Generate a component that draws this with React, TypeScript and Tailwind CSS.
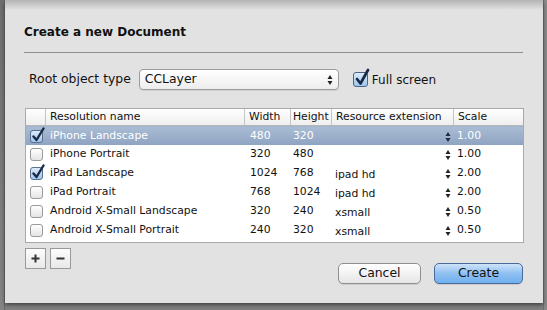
import React from "react";

const font = { fontFamily: '"DejaVu Sans", "Lucida Grande", sans-serif' };

function Check({ checked }: { checked: boolean }) {
  return (
    <div
      className={
        "relative w-[13px] h-[13px] rounded-[3px] border " +
        (checked
          ? "border-[#5a6f8c] bg-gradient-to-b from-[#dcecfb] to-[#9fc5ee]"
          : "border-[#9a9a9a] bg-gradient-to-b from-[#ffffff] to-[#e4e4e4]")
      }
    >
      {checked && (
        <svg
          className="absolute left-[0px] top-[-4px]"
          width="15"
          height="16"
          viewBox="0 0 15 16"
        >
          <path
            d="M2.5 9.5 L5.5 13 L12.5 1.5"
            fill="none"
            stroke="#1b2a44"
            strokeWidth="2.4"
            strokeLinecap="round"
            strokeLinejoin="round"
          />
        </svg>
      )}
    </div>
  );
}

function Stepper({ light }: { light?: boolean }) {
  const c = light ? "#1e2a3e" : "#222";
  return (
    <svg width="6" height="12" viewBox="0 0 6 12">
      <path d="M3 1 L5.5 5 L0.5 5 Z" fill={c} />
      <path d="M3 11 L5.5 7 L0.5 7 Z" fill={c} />
    </svg>
  );
}

const rows = [
  { on: true, name: "iPhone Landscape", w: "480", h: "320", ext: "", s: "1.00", sel: true },
  { on: false, name: "iPhone Portrait", w: "320", h: "480", ext: "", s: "1.00" },
  { on: true, name: "iPad Landscape", w: "1024", h: "768", ext: "ipad hd", s: "2.00" },
  { on: false, name: "iPad Portrait", w: "768", h: "1024", ext: "ipad hd", s: "2.00" },
  { on: false, name: "Android X-Small Landscape", w: "320", h: "240", ext: "xsmall", s: "0.50" },
  { on: false, name: "Android X-Small Portrait", w: "240", h: "320", ext: "xsmall", s: "0.50" },
];

export default function App() {
  return (
    <div
      className="w-[547px] h-[310px] bg-[#828282] flex overflow-hidden"
      style={font}
    >
      <div className="w-[5px] h-full bg-gradient-to-b from-[#6e6e6e] to-[#858585] border-r border-[#6a6a6a]" />
      <div className="w-[538px] h-[303px] bg-[#e2e2e2] flex flex-col shadow-[0_2px_4px_rgba(0,0,0,0.5)] relative">
        <div className="absolute left-0 right-0 top-0 h-[10px] bg-gradient-to-b from-[#b4b4b4] to-[#e2e2e2]" />
        <div className="relative pl-[19px] pr-[20px] flex flex-col">
          <div className="h-[52px] pt-[24px] text-[12px] font-bold text-[#111] leading-[16px]">
            Create a new Document
          </div>
          <div className="h-px bg-[#8e8e8e]" />
          <div className="flex items-center h-[55px] pl-[5px] pb-[2px]">
            <span className="text-[12.4px] text-[#111] mr-[8px]">Root object type</span>
            <div className="w-[200px] h-[21px] rounded-[4px] border border-[#9c9c9c] bg-gradient-to-b from-[#ffffff] to-[#ededed] shadow-[0_1px_0_rgba(0,0,0,0.08)] flex items-center pl-[5px] pr-[5px]">
              <span className="text-[12.4px] text-[#111] flex-1">CCLayer</span>
              <Stepper />
            </div>
            <div className="ml-[14px] flex items-center">
              <div className="w-[15px] h-[15px] rounded-[3px] border border-[#4d6585] bg-gradient-to-b from-[#dcecfb] to-[#9fc5ee] relative">
                <svg className="absolute left-[0px] top-[-5px]" width="17" height="19" viewBox="0 0 17 19">
                  <path d="M3 11 L6.5 15.5 L14 2" fill="none" stroke="#1b2a44" strokeWidth="2.7" strokeLinecap="round" strokeLinejoin="round" />
                </svg>
              </div>
              <span className="text-[12px] text-[#111] ml-[4px]">Full screen</span>
            </div>
          </div>
          <div className="ml-[1px] mr-[-1px] h-[135px] bg-white border border-[#a9a9a9] flex flex-col">
            <div className="h-[17px] flex items-stretch border-b border-[#b9b9b9] bg-gradient-to-b from-[#ffffff] to-[#eeeeee] text-[10.8px] text-[#111]">
              <div className="w-[20px] border-r border-[#c4c4c4]" />
              <div className="w-[199px] pl-[4px] border-r border-[#c4c4c4] flex items-center">Resolution name</div>
              <div className="w-[46px] pl-[4px] border-r border-[#c4c4c4] flex items-center">Width</div>
              <div className="w-[41px] pl-[2px] border-r border-[#c4c4c4] flex items-center">Height</div>
              <div className="w-[122px] pl-[4px] border-r border-[#c4c4c4] flex items-center">Resource extension</div>
              <div className="flex-1 pl-[4px] flex items-center">Scale</div>
            </div>
            {rows.map((r, i) => (
              <div
                key={i}
                className={
                  "h-[19px] flex items-center text-[10.8px] " +
                  (r.sel
                    ? "bg-gradient-to-b from-[#a9bcd4] to-[#8fa4c2] text-white border-t border-[#a0b3cc]"
                    : "text-[#111]")
                }
              >
                <div className="w-[20px] flex justify-center pl-[1px]">
                  <Check checked={r.on} />
                </div>
                <div className="w-[204px] pl-[4px]">{r.name}</div>
                <div className="w-[43px]">{r.w}</div>
                <div className="w-[42px]">{r.h}</div>
                <div className="w-[110px] pt-[3px]">{r.ext}</div>
                <div className="w-[12px] flex items-center pt-[1px]">
                  <Stepper light={r.sel} />
                </div>
                <div className="flex-1">{r.s}</div>
              </div>
            ))}
          </div>
          <div className="flex mt-[5px] ml-[1px] gap-[4px]">
            <div className="w-[21px] h-[21px] border border-[#999] bg-gradient-to-b from-[#fdfdfd] to-[#e9e9e9] flex items-center justify-center text-[#333]">
              <svg width="9" height="9" viewBox="0 0 9 9"><path d="M4.5 0.5 V8.5 M0.5 4.5 H8.5" stroke="#333" strokeWidth="2" /></svg>
            </div>
            <div className="w-[21px] h-[21px] border border-[#999] bg-gradient-to-b from-[#fdfdfd] to-[#e9e9e9] flex items-center justify-center">
              <svg width="9" height="9" viewBox="0 0 9 9"><path d="M0.5 4.5 H8.5" stroke="#333" strokeWidth="2" /></svg>
            </div>
          </div>
          <div className="flex justify-end mt-[-6px] gap-[13px]">
            <div className="w-[83px] h-[21px] rounded-[5px] border border-[#8f8f8f] bg-gradient-to-b from-[#ffffff] to-[#e6e6e6] shadow-[0_1px_0_rgba(0,0,0,0.1)] flex items-center justify-center text-[12.4px] text-[#111]">
              Cancel
            </div>
            <div className="w-[89px] h-[21px] rounded-[5px] border border-[#4a6a9c] bg-gradient-to-b from-[#cfe3f9] via-[#8fc0f1] to-[#6fb0f0] shadow-[0_1px_0_rgba(0,0,0,0.1)] flex items-center justify-center text-[12.4px] text-[#111]">
              Create
            </div>
          </div>
        </div>
      </div>
      <div className="flex-1 h-full bg-[#8a8a8a] border-l border-[#707070]" />
    </div>
  );
}
